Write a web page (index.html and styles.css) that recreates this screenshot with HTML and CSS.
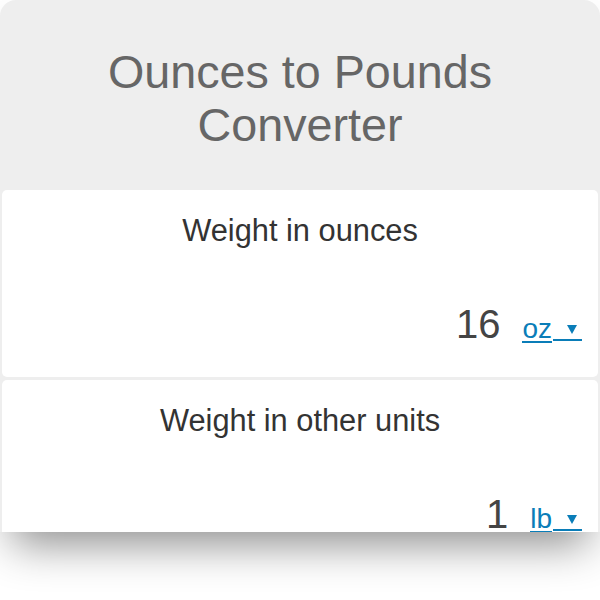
FILE: index.html
```html
<!DOCTYPE html>
<html lang="en">
<head>
    <meta charset="UTF-8">
    <meta name="viewport" content="width=device-width, initial-scale=1.0">
    <title>Ounces to Pounds Converter</title>
    <link rel="stylesheet" href="styles.css">
</head>
<body>
    <div id="calculator">
        <div class="header">
            <h1>Ounces to Pounds Converter</h1>
        </div>
        <div class="field">
            <div class="label">Weight in ounces</div>
            <div class="value-row">
                <span class="value">16</span>
                <a href="#" class="unit">
                    <span class="unit-name">oz</span>
                    <span class="unit-caret">
                        <svg width="10" height="9" viewBox="0 0 10 9"><polygon points="0,0 10,0 5,9" fill="currentColor"/></svg>
                    </span>
                </a>
            </div>
        </div>
        <div class="field">
            <div class="label">Weight in other units</div>
            <div class="value-row">
                <span class="value">1</span>
                <a href="#" class="unit">
                    <span class="unit-name">lb</span>
                    <span class="unit-caret">
                        <svg width="10" height="9" viewBox="0 0 10 9"><polygon points="0,0 10,0 5,9" fill="currentColor"/></svg>
                    </span>
                </a>
            </div>
        </div>
    </div>
</body>
</html>
```

FILE: styles.css
```css
html, body {
    height: 600px;
}
body {
    font-family: "Liberation Sans", Arial, sans-serif;
    margin: 0;
    padding: 0;
    background-color: white;
}
#calculator {
    width: 600px;
    height: 532px;
    overflow: hidden;
    background-color: #eeeeee;
    border-radius: 16px 16px 0 0;
    box-shadow: 0 24px 44px -12px rgba(0, 0, 0, 0.45);
}
.header {
    height: 190px;
    box-sizing: border-box;
    padding: 46px 60px 0;
}
.header h1 {
    margin: 0;
    font-size: 46.7px;
    line-height: 53px;
    font-weight: normal;
    color: #666666;
    text-align: center;
}
.field {
    margin: 0 2px 3px;
    padding: 23px 0 30px;
    background-color: white;
    border-radius: 5px;
}
.label {
    font-size: 30.8px;
    line-height: 36px;
    color: #333333;
    text-align: center;
}
.value-row {
    display: flex;
    justify-content: flex-end;
    align-items: baseline;
    gap: 22px;
    margin-top: 52px;
    padding-right: 16px;
}
.value {
    font-size: 40px;
    line-height: 46px;
    color: #444444;
}
.unit {
    display: flex;
    color: #0a7db8;
    text-decoration: none;
}
.unit-name {
    font-size: 28px;
    line-height: 24px;
    border-bottom: 2px solid;
}
.unit-caret {
    display: flex;
    justify-content: flex-end;
    width: 29px;
    height: 24px;
    box-sizing: border-box;
    margin-left: 1px;
    padding: 8px 5px 0 0;
    border-bottom: 2px solid;
}
```
